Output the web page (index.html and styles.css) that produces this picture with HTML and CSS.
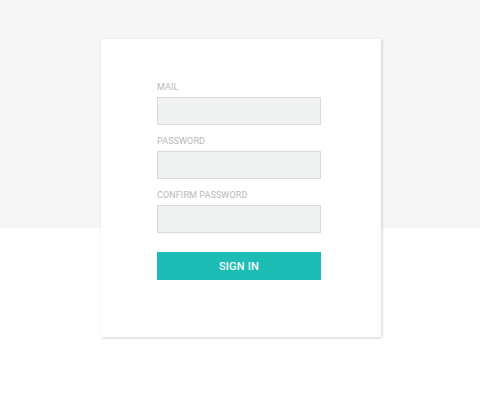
FILE: index.html
```html
<!DOCTYPE html>
<html>
<head>
<meta charset="utf-8">
<link rel="stylesheet" href="styles.css">
</head>
<body>
<div class="page">
  <form class="card">
    <label class="field">
      <span class="label">MAIL</span>
      <span class="input"></span>
    </label>
    <label class="field">
      <span class="label">PASSWORD</span>
      <span class="input"></span>
    </label>
    <label class="field">
      <span class="label">CONFIRM PASSWORD</span>
      <span class="input"></span>
    </label>
    <button type="button" class="btn">SIGN IN</button>
  </form>
</div>
</body>
</html>
```
FILE: styles.css
```css
html, body {
  margin: 0;
  padding: 0;
  background: #ffffff;
}
.page {
  height: 406px;
  padding-top: 39px;
  box-sizing: border-box;
  background: linear-gradient(#f6f6f6 0, #f6f6f6 228px, #ffffff 228px);
  font-family: Roboto, "Liberation Sans", sans-serif;
}
.card {
  width: 280px;
  height: 298px;
  box-sizing: border-box;
  margin: 0 0 0 101px;
  padding: 43px 60px 0 56px;
  background: #ffffff;
  box-shadow: 1px 1px 3px rgba(0, 0, 0, 0.18);
  display: flex;
  flex-direction: column;
}
.field {
  display: flex;
  flex-direction: column;
  gap: 4px;
  margin-bottom: 11px;
}
.label {
  font-size: 9px;
  line-height: 11px;
  color: #b8b8b8;
  letter-spacing: 0.1px;
}
.input {
  display: block;
  height: 28px;
  box-sizing: border-box;
  border: 1px solid #d9dbda;
  background: #f0f2f1;
}
.btn {
  margin-top: 8px;
  height: 28px;
  border: 0;
  padding: 0;
  background: #1dbdb5;
  color: #ffffff;
  font-family: Roboto, "Liberation Sans", sans-serif;
  font-size: 11px;
  font-weight: 500;
  letter-spacing: 0.2px;
}
```
